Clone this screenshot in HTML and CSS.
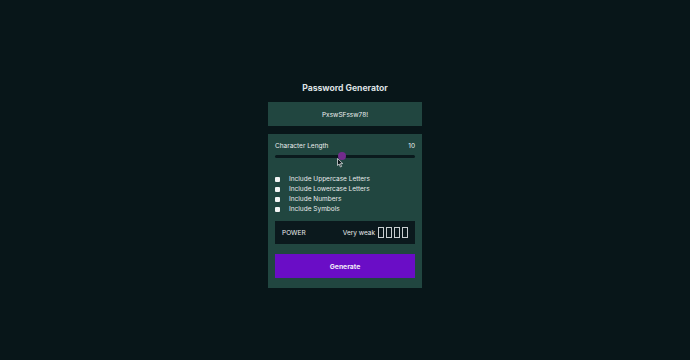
FILE: index.html
```html
<!DOCTYPE html>
<html lang="en">
<head>
<meta charset="utf-8">
<title>Password Generator</title>
<link rel="stylesheet" href="styles.css">
</head>
<body>
<main class="app">
  <h1 class="title">Password Generator</h1>
  <div class="output">PxswSFssw78!</div>
  <section class="panel">
    <div class="length-row">
      <span>Character Length</span>
      <span>10</span>
    </div>
    <div class="slider">
      <div class="track"></div>
      <div class="thumb"></div>
      <svg class="cursor" width="7" height="10" viewBox="0 0 7 10"><path d="M0.5 0.5 L0.5 7.5 L2.2 6 L3.4 9 L4.6 8.5 L3.4 5.6 L5.8 5.6 Z" fill="#0b1518" stroke="#d8dcdd" stroke-width="0.8"/></svg>
    </div>
    <ul class="options">
      <li><span class="box"></span>Include Uppercase Letters</li>
      <li><span class="box"></span>Include Lowercase Letters</li>
      <li><span class="box"></span>Include Numbers</li>
      <li><span class="box"></span>Include Symbols</li>
    </ul>
    <div class="power">
      <span>POWER</span>
      <div class="strength">
        <span class="label">Very weak</span>
        <span class="bar"></span><span class="bar"></span><span class="bar"></span><span class="bar"></span>
      </div>
    </div>
    <button class="generate">Generate</button>
  </section>
</main>
</body>
</html>
```
FILE: styles.css
```css
html, body {
  margin: 0;
  padding: 0;
  background: #081619;
  height: 100%;
}
body {
  font-family: Inter, "Liberation Sans", sans-serif;
  color: #e3e7e8;
}
.app {
  width: 154px;
  margin: 0 auto;
  padding-top: 82px;
  display: flex;
  flex-direction: column;
}
.title {
  margin: 0 0 7px;
  text-align: center;
  font-size: 8.6px;
  line-height: 13px;
  font-weight: 700;
  color: #dde1e3;
}
.output {
  height: 24px;
  background: #214640;
  display: flex;
  align-items: center;
  justify-content: center;
  padding-top: 1px;
  box-sizing: border-box;
  font-size: 6.5px;
  color: #eceff0;
  margin-bottom: 8px;
}
.panel {
  background: #214640;
  padding: 7px 7px 10px;
  display: flex;
  flex-direction: column;
}
.length-row {
  display: flex;
  justify-content: space-between;
  font-size: 6.5px;
  line-height: 11px;
  color: #eaeded;
}
.slider {
  position: relative;
  height: 10px;
  margin-top: -1px;
  display: flex;
  align-items: center;
}
.track {
  width: 100%;
  height: 3px;
  border-radius: 2px;
  background: #0a1a1d;
}
.thumb {
  position: absolute;
  left: 63px;
  top: 1px;
  width: 8px;
  height: 8px;
  border-radius: 50%;
  background: #722b8c;
}
.cursor {
  position: absolute;
  left: 62px;
  top: 7px;
}
.options {
  list-style: none;
  margin: 13px 0 0;
  padding: 0;
  display: flex;
  flex-direction: column;
}
.options li {
  display: flex;
  align-items: center;
  height: 10px;
  font-size: 6.5px;
  line-height: 11px;
  padding-top: 1px;
  box-sizing: border-box;
  color: #e8ebec;
}
.box {
  width: 5px;
  height: 5px;
  margin: -1px 9px 0 0;
  background: #f2f4f4;
  border-radius: 1px;
}
.power {
  margin-top: 7px;
  height: 23px;
  background: #0b191d;
  display: flex;
  align-items: center;
  justify-content: space-between;
  padding: 1px 7px 0;
  box-sizing: border-box;
  font-size: 6.5px;
  color: #e8ebec;
}
.strength {
  display: flex;
  align-items: center;
  gap: 2px;
}
.strength .label {
  margin-right: 1px;
}
.bar {
  width: 4px;
  height: 9px;
  margin-top: -1px;
  border: 1px solid #c9cfd1;
}
.generate {
  margin-top: 10px;
  height: 24px;
  border: none;
  padding: 1px 0 0;
  background: #6a0dc6;
  color: #f3ecfa;
  font-family: Inter, "Liberation Sans", sans-serif;
  font-size: 6.8px;
  font-weight: 700;
  cursor: pointer;
}
```
